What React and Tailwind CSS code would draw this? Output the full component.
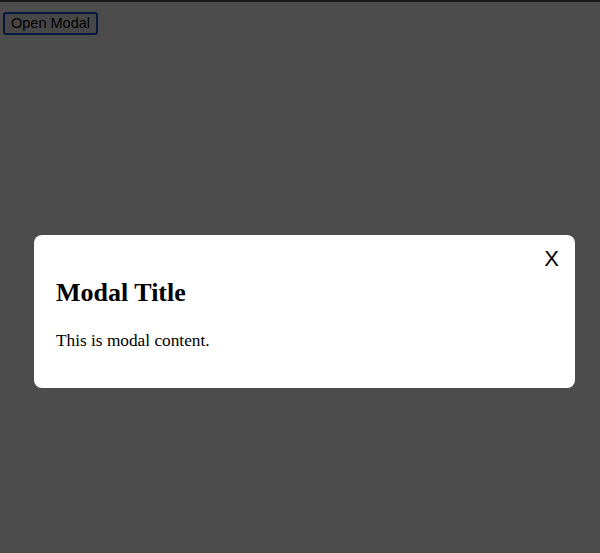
import React, { useState } from "react";

const App = () => {
  const [open, setOpen] = useState(true);

  return (
    <div className="w-full h-[553px] bg-white">
      <div className="h-[2px] bg-[#555]"></div>
      <button
        onClick={() => setOpen(true)}
        className="ml-[3px] mt-[10px] px-[6px] h-[23px] text-[14.5px] bg-[#efefef] border-2 border-[#1a4fd0] rounded-[3px] text-black leading-none"
        style={{ fontFamily: "'Liberation Sans', Arial, sans-serif" }}
      >
        Open Modal
      </button>

      {open && (
        <div className="fixed inset-0 bg-black/70 flex items-center justify-center">
          <div className="relative bg-white w-[541px] h-[153px] rounded-[8px] px-[22px] pt-[20px] mt-[70px] ml-[9px]">
            <button
              onClick={() => setOpen(false)}
              className="absolute right-[16px] top-[7px] text-[22px] text-black"
              style={{ fontFamily: "'Liberation Sans', Arial, sans-serif" }}
            >
              X
            </button>
            <h2
              className="text-[26px] leading-[30px] font-bold text-black mt-[23px]"
              style={{ fontFamily: "'Liberation Serif', 'Times New Roman', serif" }}
            >
              Modal Title
            </h2>
            <p
              className="text-[17.3px] text-black mt-[20px]"
              style={{ fontFamily: "'Liberation Serif', 'Times New Roman', serif" }}
            >
              This is modal content.
            </p>
          </div>
        </div>
      )}
    </div>
  );
};

export default App;
